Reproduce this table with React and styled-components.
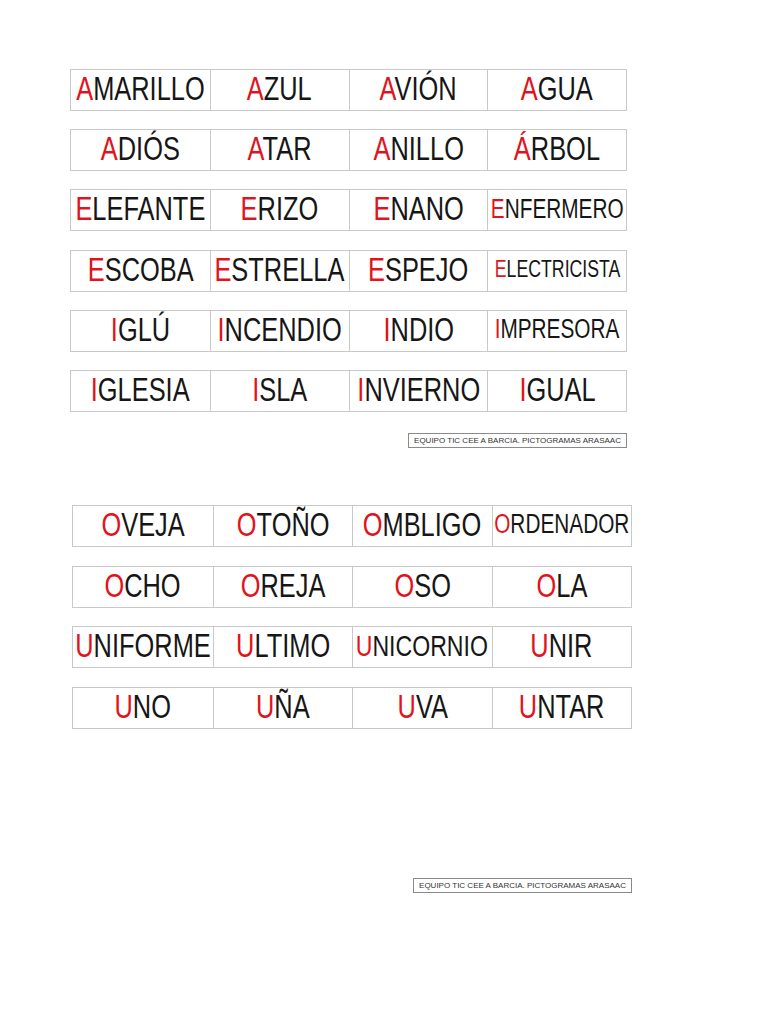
import React from "react";
import styled, { createGlobalStyle } from "styled-components";

const GlobalStyle = createGlobalStyle`
    body {
        margin: 0;
        background: #ffffff;
        font-family: "Liberation Sans", Arial, sans-serif;
    }
`;

const Page = styled.div`
    width: 768px;
    height: 1024px;
    padding-top: 69px;
    box-sizing: border-box;
    display: flex;
    flex-direction: column;
`;

const Sheet = styled.section`
    margin-left: ${props => props.left}px;
    width: ${props => props.width}px;
    margin-bottom: ${props => props.bottom}px;
    display: flex;
    flex-direction: column;
`;

const Rows = styled.div`
    display: flex;
    flex-direction: column;
    gap: ${props => props.gap}px;
`;

const Row = styled.div`
    display: grid;
    grid-template-columns: repeat(4, 1fr);
    height: 42px;
    border: 1px solid #c9c9c9;
    box-sizing: border-box;
`;

const Cell = styled.div`
    display: flex;
    align-items: center;
    justify-content: center;
    border-left: 1px solid #c9c9c9;
    padding-bottom: 3px;
    box-sizing: border-box;
    min-width: 0;
    white-space: nowrap;
    &:first-child {
        border-left: none;
    }
`;

const Word = styled.span`
    display: inline-block;
    font-family: "Liberation Sans", Arial, sans-serif;
    font-size: ${props => props.size}px;
    color: #161616;
    transform: scaleX(0.77);
    transform-origin: center;
`;

const First = styled.span`
    color: #e1141e;
`;

const Credit = styled.div`
    align-self: flex-end;
    margin-top: ${props => props.top}px;
    width: 219px;
    height: 15px;
    border: 1px solid #8a8a8a;
    box-sizing: border-box;
    display: flex;
    align-items: center;
    justify-content: center;
    font-family: "Liberation Sans", Arial, sans-serif;
    font-size: 8px;
    color: #333;
    white-space: nowrap;
`;

const first = [
    [["AMARILLO"], ["AZUL"], ["AVIÓN"], ["AGUA"]],
    [["ADIÓS"], ["ATAR"], ["ANILLO"], ["ÁRBOL"]],
    [["ELEFANTE"], ["ERIZO"], ["ENANO"], ["ENFERMERO", 27]],
    [["ESCOBA"], ["ESTRELLA"], ["ESPEJO"], ["ELECTRICISTA", 23]],
    [["IGLÚ"], ["INCENDIO"], ["INDIO"], ["IMPRESORA", 27]],
    [["IGLESIA"], ["ISLA"], ["INVIERNO"], ["IGUAL"]],
];

const second = [
    [["OVEJA"], ["OTOÑO"], ["OMBLIGO"], ["ORDENADOR", 27]],
    [["OCHO"], ["OREJA"], ["OSO"], ["OLA"]],
    [["UNIFORME"], ["ULTIMO"], ["UNICORNIO", 30], ["UNIR"]],
    [["UNO"], ["UÑA"], ["UVA"], ["UNTAR"]],
];

const WordTable = ({ rows, gap }) => (
    <Rows gap={gap}>
        {rows.map((row, i) => (
            <Row key={i}>
                {row.map(([text, size]) => (
                    <Cell key={text}>
                        <Word size={size || 33}>
                            <First>{text[0]}</First>{text.slice(1)}
                        </Word>
                    </Cell>
                ))}
            </Row>
        ))}
    </Rows>
);

const App = () => {
    return (
        <>
            <GlobalStyle />
            <Page>
                <Sheet left={70} width={557} bottom={57}>
                    <WordTable rows={first} gap={18.2} />
                    <Credit top={21}>EQUIPO TIC CEE A BARCIA. PICTOGRAMAS ARASAAC</Credit>
                </Sheet>
                <Sheet left={72} width={560} bottom={0}>
                    <WordTable rows={second} gap={18.7} />
                    <Credit top={149}>EQUIPO TIC CEE A BARCIA. PICTOGRAMAS ARASAAC</Credit>
                </Sheet>
            </Page>
        </>
    );
};

export default App;
